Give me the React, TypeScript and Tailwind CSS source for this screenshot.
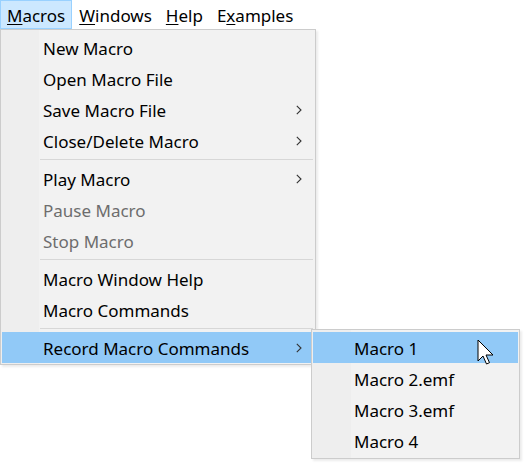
import React from 'react'

type Item =
  | { kind: 'item'; label: string; sub?: boolean; disabled?: boolean; active?: boolean }
  | { kind: 'sep' }

const font = { fontFamily: '"Segoe UI", "Noto Sans", "Open Sans", sans-serif' }

const macroItems: Item[] = [
  { kind: 'item', label: 'New Macro' },
  { kind: 'item', label: 'Open Macro File' },
  { kind: 'item', label: 'Save Macro File', sub: true },
  { kind: 'item', label: 'Close/Delete Macro', sub: true },
  { kind: 'sep' },
  { kind: 'item', label: 'Play Macro', sub: true },
  { kind: 'item', label: 'Pause Macro', disabled: true },
  { kind: 'item', label: 'Stop Macro', disabled: true },
  { kind: 'sep' },
  { kind: 'item', label: 'Macro Window Help' },
  { kind: 'item', label: 'Macro Commands' },
  { kind: 'sep' },
  { kind: 'item', label: 'Record Macro Commands', sub: true, active: true },
]

const recordItems = ['Macro 1', 'Macro 2.emf', 'Macro 3.emf', 'Macro 4']

function Chevron() {
  return (
    <svg width="6" height="10" viewBox="0 0 6 10" className="shrink-0 -mt-[2px]">
      <path d="M0.8 0.8 L5 5 L0.8 9.2" fill="none" stroke="#333" strokeWidth="1.1" />
    </svg>
  )
}

function Cursor() {
  return (
    <svg width="20" height="30" viewBox="0 0 20 30" className="absolute left-[477px] top-[339px]">
      <path
        d="M1 1 L1 22 L6 17 L9.5 25 L12.5 23.7 L9 16 L16 16 Z"
        fill="#fff"
        stroke="#000"
        strokeWidth="1"
        strokeLinejoin="miter"
      />
    </svg>
  )
}

// one letter underlined for the keyboard shortcut
function Mnemonic({ text, at }: { text: string; at: number }) {
  return (
    <>
      {text.slice(0, at)}
      <span className="underline underline-offset-2 decoration-1">{text[at]}</span>
      {text.slice(at + 1)}
    </>
  )
}

export default function App() {
  return (
    <div className="relative w-[526px] h-[470px] bg-white text-[17px] text-black overflow-hidden" style={font}>
      {/* menu bar */}
      <div className="flex h-[29px] items-stretch">
        <div className="flex items-center pt-[2px] px-[6px] bg-[#cce8ff] border border-[#99d1ff]">
          <Mnemonic text="Macros" at={0} />
        </div>
        <div className="flex items-center pt-[2px] px-[7px]">
          <Mnemonic text="Windows" at={0} />
        </div>
        <div className="flex items-center pt-[2px] px-[7px]">
          <Mnemonic text="Help" at={0} />
        </div>
        <div className="flex items-center pt-[2px] px-[7px]">
          <Mnemonic text="Examples" at={1} />
        </div>
      </div>

      {/* Macros dropdown */}
      <div className="w-[316px] border border-[#cccccc] pt-[2px] pb-[1px] px-[1px] bg-[linear-gradient(to_right,#eeeeee_38px,#f2f2f2_38px)] shadow-[2px_2px_2px_rgba(0,0,0,0.08)]">
        {macroItems.map((it, i) =>
          it.kind === 'sep' ? (
            <div key={i} className="h-[7px] flex items-center pl-[38px] pr-[1px]">
              <div className="h-px w-full bg-[#d7d7d7]" />
            </div>
          ) : (
            <div
              key={i}
              className={`h-[31px] flex items-center justify-between pt-[2px] pl-[41px] pr-[12px] ${
                it.active ? 'bg-[#91c9f7]' : ''
              } ${it.disabled ? 'text-[#6d6d6d]' : ''}`}
            >
              <span>{it.label}</span>
              {it.sub && <Chevron />}
            </div>
          )
        )}
      </div>

      {/* Record Macro Commands submenu */}
      <div className="absolute left-[311px] top-[329px] w-[209px] border border-[#cccccc] pt-[2px] pb-[2px] px-[1px] bg-[linear-gradient(to_right,#eeeeee_39px,#f2f2f2_39px)] shadow-[2px_2px_2px_rgba(0,0,0,0.08)]">
        {recordItems.map((label, i) => (
          <div
            key={label}
            className={`h-[31px] flex items-center pt-[2px] pl-[41px] ${i === 0 ? 'bg-[#91c9f7]' : ''}`}
          >
            {label}
          </div>
        ))}
      </div>

      <Cursor />
    </div>
  )
}
